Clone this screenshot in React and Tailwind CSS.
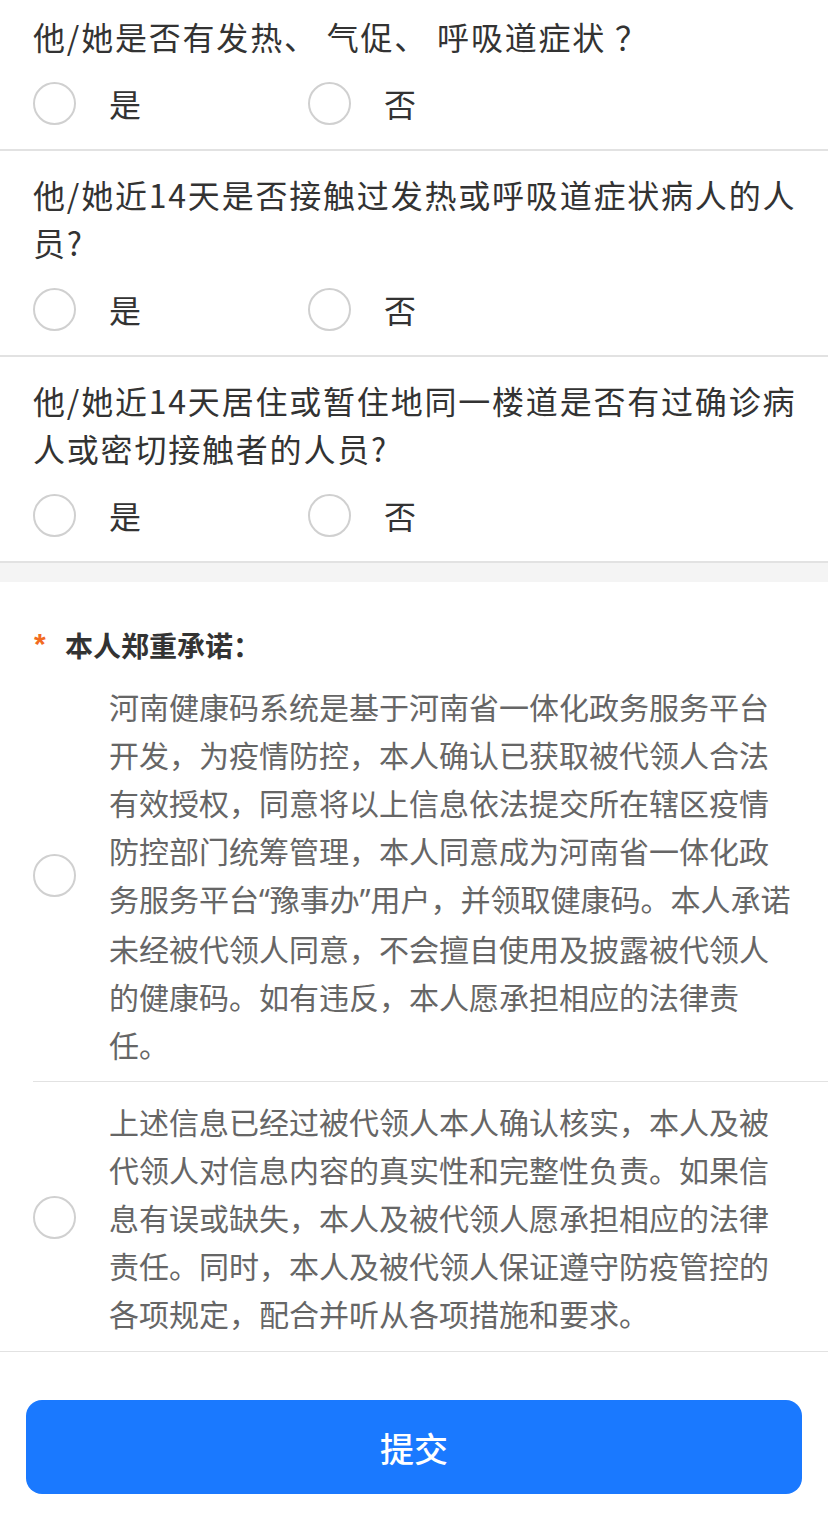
import React from 'react'

const questions = [
  { lines: ['他/她是否有发热、 气促、 呼吸道症状 ？'], first: true },
  { lines: ['他/她近14天是否接触过发热或呼吸道症状病人的人', '员?'] },
  { lines: ['他/她近14天居住或暂住地同一楼道是否有过确诊病', '人或密切接触者的人员?'] },
]

const Q = ({ c }) => <span className="font-['Noto_Sans',sans-serif]">{c}</span>

const promises = [
  [
    '河南健康码系统是基于河南省一体化政务服务平台',
    '开发，为疫情防控，本人确认已获取被代领人合法',
    '有效授权，同意将以上信息依法提交所在辖区疫情',
    '防控部门统筹管理，本人同意成为河南省一体化政',
    <>务服务平台<Q c="“" />豫事办<Q c="”" />用户，并领取健康码。本人承诺</>,
    '未经被代领人同意，不会擅自使用及披露被代领人',
    '的健康码。如有违反，本人愿承担相应的法律责',
    '任。',
  ],
  [
    '上述信息已经过被代领人本人确认核实，本人及被',
    '代领人对信息内容的真实性和完整性负责。如果信',
    '息有误或缺失，本人及被代领人愿承担相应的法律',
    '责任。同时，本人及被代领人保证遵守防疫管控的',
    '各项规定，配合并听从各项措施和要求。',
  ],
]

function Circle () {
  return <span className="block shrink-0 w-[43px] h-[43px] rounded-full border-2 border-[#d0d0d0] bg-white" />
}

function Lines ({ lines }) {
  return lines.map((l, i) => (
    <React.Fragment key={i}>
      {i > 0 && <br />}
      {l}
    </React.Fragment>
  ))
}

export default function App () {
  return (
    <div className="min-h-screen bg-white font-['Noto_Sans_CJK_SC','Noto_Sans',sans-serif] text-[#333]">
      {/* questions */}
      {questions.map((q, i) => (
        <div key={i} className={(q.first ? 'pt-3' : 'pt-[19px]') + ' pb-6 px-[33px] border-b-2 border-[#e2e2e2]'}>
          <p className="text-[32px] leading-[48px] tracking-[1.8px] whitespace-nowrap">
            <Lines lines={q.lines} />
          </p>
          <div className="mt-[22px] flex">
            {['是', '否'].map((o) => (
              <label key={o} className="w-[275px] flex items-center gap-[33px]">
                <Circle />
                <span className="text-[32px] leading-[43px]">{o}</span>
              </label>
            ))}
          </div>
        </div>
      ))}

      <div className="h-[19px] bg-[#f4f4f4]" />

      {/* promise */}
      <div className="pt-[39px]">
        <div className="px-[34px] flex items-center h-12">
          <span className="w-[16px] text-[30px] font-bold text-[#f26b21] self-start leading-[30px] mt-[8px] font-['Liberation_Sans',sans-serif]">*</span>
          <span className="ml-[15px] text-[28px] font-bold text-[#333]">本人郑重承诺：</span>
        </div>
        <div className="border-b border-[#e2e2e2]">
          <div className="pl-[33px]">
            {promises.map((p, i) => (
              <div
                key={i}
                className={(i === 0 ? 'pt-[13px] pb-[13px] border-b border-[#e2e2e2]' : 'pt-[15px] pb-[14px]') + ' flex items-center'}
              >
                <Circle />
                <p className="ml-[33px] text-[30px] leading-[48px] text-[#666] whitespace-nowrap">
                  <Lines lines={p} />
                </p>
              </div>
            ))}
          </div>
        </div>
      </div>

      <div className="px-[26px] pt-12 pb-[23px]">
        <button className="w-full h-[94px] rounded-[16px] bg-[#1a79ff] text-white text-[34px] font-medium">
          提交
        </button>
      </div>
    </div>
  )
}
